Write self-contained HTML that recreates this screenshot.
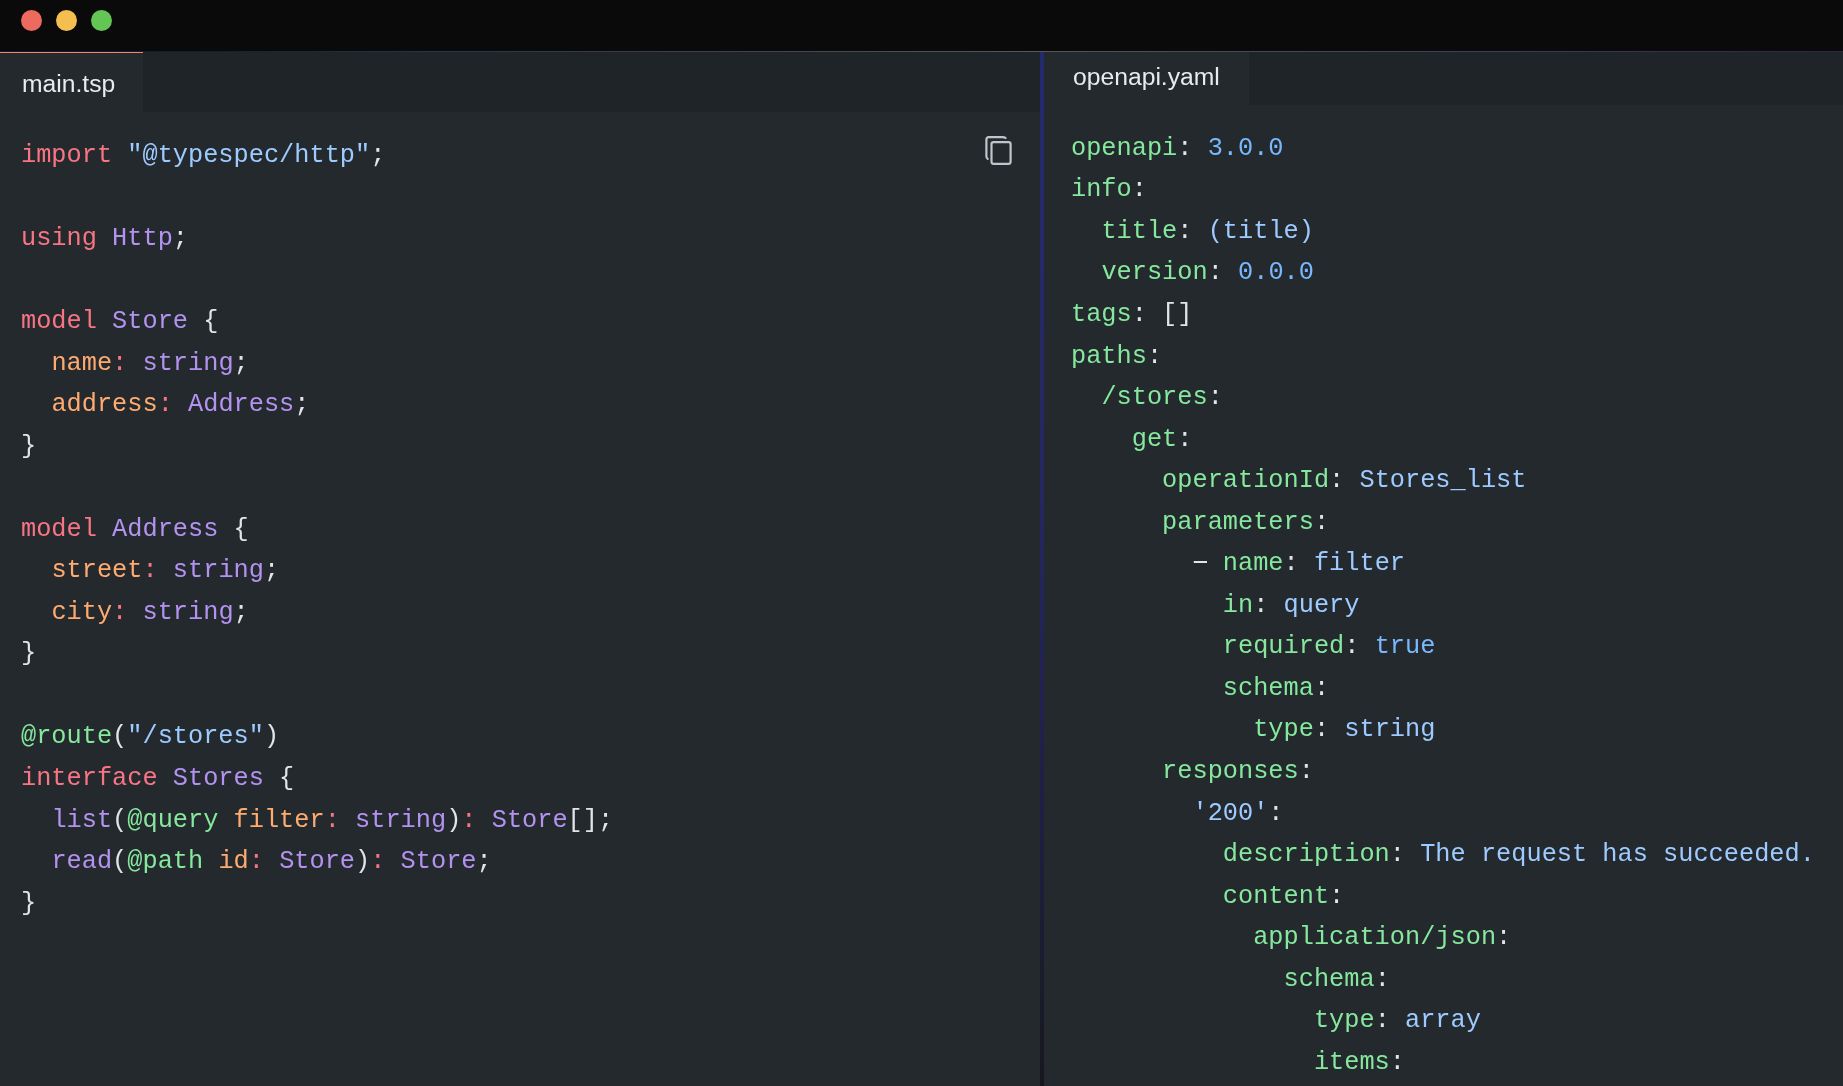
<!DOCTYPE html>
<html><head><meta charset="utf-8">
<style>
html,body{margin:0;padding:0;}
body{width:1843px;height:1086px;overflow:hidden;background:#24292e;position:relative;font-family:"Liberation Sans",sans-serif;}
.abs{position:absolute;}
#title{left:0;top:0;width:1843px;height:51px;background:#0a0a0a;}
.dot{position:absolute;width:21px;height:21px;border-radius:50%;top:10px;}
#topline{left:0;top:51px;width:1843px;height:1px;background:linear-gradient(90deg,#0f1a26 0px,#13202f 215px,#22344a 415px,#3c4152 715px,#4a4c56 895px,#555757 1040px,#4e4e52 1115px,#4a4858 1250px,#40395a 1515px,#2e2344 1843px);}
#lstrip{left:0;top:52px;width:1040px;height:60px;background:#1f2428;}
#ltab{left:0;top:52px;width:143px;height:60px;background:#24292e;}
#lborder{left:0;top:52px;width:143px;height:1px;background:#f9826c;}
#divider{left:1040px;top:52px;width:4px;height:1034px;background:linear-gradient(180deg,#242a6e 0px,#262a6c 154px,#25275e 453px,#23245a 554px,#21224e 654px,#1e1f44 754px,#1b1c31 894px,#16171e 1034px);}
#rstrip{left:1044px;top:52px;width:799px;height:53px;background:#1f2428;}
#rtab{left:1044px;top:52px;width:205px;height:53px;background:#24292e;}
.tabtxt{position:absolute;font-size:24.7px;color:#e9ebed;will-change:transform;white-space:pre;line-height:30px;}
.ln{position:absolute;font-family:"Liberation Mono",monospace;font-size:25.3px;line-height:30px;height:30px;transform:scaleY(1.05);transform-origin:0 0;will-change:transform;color:#e1e4e8;white-space:pre;}
.dash{display:inline-block;transform:translate(0.9px,-1px) scaleX(1.9)}
.k{color:#f97583}.t{color:#b392f0}.p{color:#ffab70}.s{color:#9ecbff}.d{color:#85e89d}.c{color:#79b8ff}
</style></head><body>
<div id="title" class="abs"></div>
<div class="dot" style="left:21px;background:#ed6a5e"></div>
<div class="dot" style="left:56px;background:#f4bf4f"></div>
<div class="dot" style="left:91px;background:#62c554"></div>
<div id="topline" class="abs"></div>
<div id="lstrip" class="abs"></div>
<div id="ltab" class="abs"></div>
<div id="lborder" class="abs"></div>
<div id="rstrip" class="abs"></div>
<div id="rtab" class="abs"></div>
<div id="divider" class="abs"></div>
<div class="tabtxt" id="lt" style="left:21.5px;top:68.8px">main.tsp</div>
<div class="tabtxt" id="rt" style="left:1072.5px;top:61.8px">openapi.yaml</div>
<svg class="abs" style="left:984px;top:135px" width="30" height="31" viewBox="0 0 30 31">
<path d="M21.6 3 Q20.6 2.1 18.6 2.1 H4.8 Q2.4 2.1 2.4 4.6 V21.6 Q2.4 23.1 3.7 23.9" fill="none" stroke="#c1c4c9" stroke-width="2.2" stroke-linecap="round"/>
<rect x="7.5" y="7.1" width="19.1" height="21.7" rx="2" fill="none" stroke="#c1c4c9" stroke-width="2.2"/>
</svg>
<div class="ln" style="left:20.5px;top:139.78px"><span class="k">import</span> <span class="s">"@typespec/http"</span>;</div>
<div class="ln" style="left:20.5px;top:222.88px"><span class="k">using</span> <span class="t">Http</span>;</div>
<div class="ln" style="left:20.5px;top:305.98px"><span class="k">model</span> <span class="t">Store</span> {</div>
<div class="ln" style="left:20.5px;top:347.53px">  <span class="p">name</span><span class="k">:</span> <span class="t">string</span>;</div>
<div class="ln" style="left:20.5px;top:389.08px">  <span class="p">address</span><span class="k">:</span> <span class="t">Address</span>;</div>
<div class="ln" style="left:20.5px;top:430.63px">}</div>
<div class="ln" style="left:20.5px;top:513.73px"><span class="k">model</span> <span class="t">Address</span> {</div>
<div class="ln" style="left:20.5px;top:555.28px">  <span class="p">street</span><span class="k">:</span> <span class="t">string</span>;</div>
<div class="ln" style="left:20.5px;top:596.83px">  <span class="p">city</span><span class="k">:</span> <span class="t">string</span>;</div>
<div class="ln" style="left:20.5px;top:638.38px">}</div>
<div class="ln" style="left:20.5px;top:721.48px"><span class="d">@route</span>(<span class="s">"/stores"</span>)</div>
<div class="ln" style="left:20.5px;top:763.03px"><span class="k">interface</span> <span class="t">Stores</span> {</div>
<div class="ln" style="left:20.5px;top:804.58px">  <span class="t">list</span>(<span class="d">@query</span> <span class="p">filter</span><span class="k">:</span> <span class="t">string</span>)<span class="k">:</span> <span class="t">Store</span>[];</div>
<div class="ln" style="left:20.5px;top:846.13px">  <span class="t">read</span>(<span class="d">@path</span> <span class="p">id</span><span class="k">:</span> <span class="t">Store</span>)<span class="k">:</span> <span class="t">Store</span>;</div>
<div class="ln" style="left:20.5px;top:887.68px">}</div>
<div class="ln" style="left:1071.4px;top:132.78px"><span class="d">openapi</span>: <span class="c">3.0.0</span></div>
<div class="ln" style="left:1071.4px;top:174.33px"><span class="d">info</span>:</div>
<div class="ln" style="left:1071.4px;top:215.88px">  <span class="d">title</span>: <span class="s">(title)</span></div>
<div class="ln" style="left:1071.4px;top:257.43px">  <span class="d">version</span>: <span class="c">0.0.0</span></div>
<div class="ln" style="left:1071.4px;top:298.98px"><span class="d">tags</span>: []</div>
<div class="ln" style="left:1071.4px;top:340.53px"><span class="d">paths</span>:</div>
<div class="ln" style="left:1071.4px;top:382.08px">  <span class="d">/stores</span>:</div>
<div class="ln" style="left:1071.4px;top:423.63px">    <span class="d">get</span>:</div>
<div class="ln" style="left:1071.4px;top:465.18px">      <span class="d">operationId</span>: <span class="s">Stores_list</span></div>
<div class="ln" style="left:1071.4px;top:506.73px">      <span class="d">parameters</span>:</div>
<div class="ln" style="left:1071.4px;top:548.28px">        <span class="dash">-</span> <span class="d">name</span>: <span class="s">filter</span></div>
<div class="ln" style="left:1071.4px;top:589.83px">          <span class="d">in</span>: <span class="s">query</span></div>
<div class="ln" style="left:1071.4px;top:631.38px">          <span class="d">required</span>: <span class="c">true</span></div>
<div class="ln" style="left:1071.4px;top:672.93px">          <span class="d">schema</span>:</div>
<div class="ln" style="left:1071.4px;top:714.48px">            <span class="d">type</span>: <span class="s">string</span></div>
<div class="ln" style="left:1071.4px;top:756.03px">      <span class="d">responses</span>:</div>
<div class="ln" style="left:1071.4px;top:797.58px">        <span class="s">'200'</span>:</div>
<div class="ln" style="left:1071.4px;top:839.13px">          <span class="d">description</span>: <span class="s">The request has succeeded.</span></div>
<div class="ln" style="left:1071.4px;top:880.68px">          <span class="d">content</span>:</div>
<div class="ln" style="left:1071.4px;top:922.23px">            <span class="d">application/json</span>:</div>
<div class="ln" style="left:1071.4px;top:963.78px">              <span class="d">schema</span>:</div>
<div class="ln" style="left:1071.4px;top:1005.33px">                <span class="d">type</span>: <span class="s">array</span></div>
<div class="ln" style="left:1071.4px;top:1046.88px">                <span class="d">items</span>:</div>
</body></html>
